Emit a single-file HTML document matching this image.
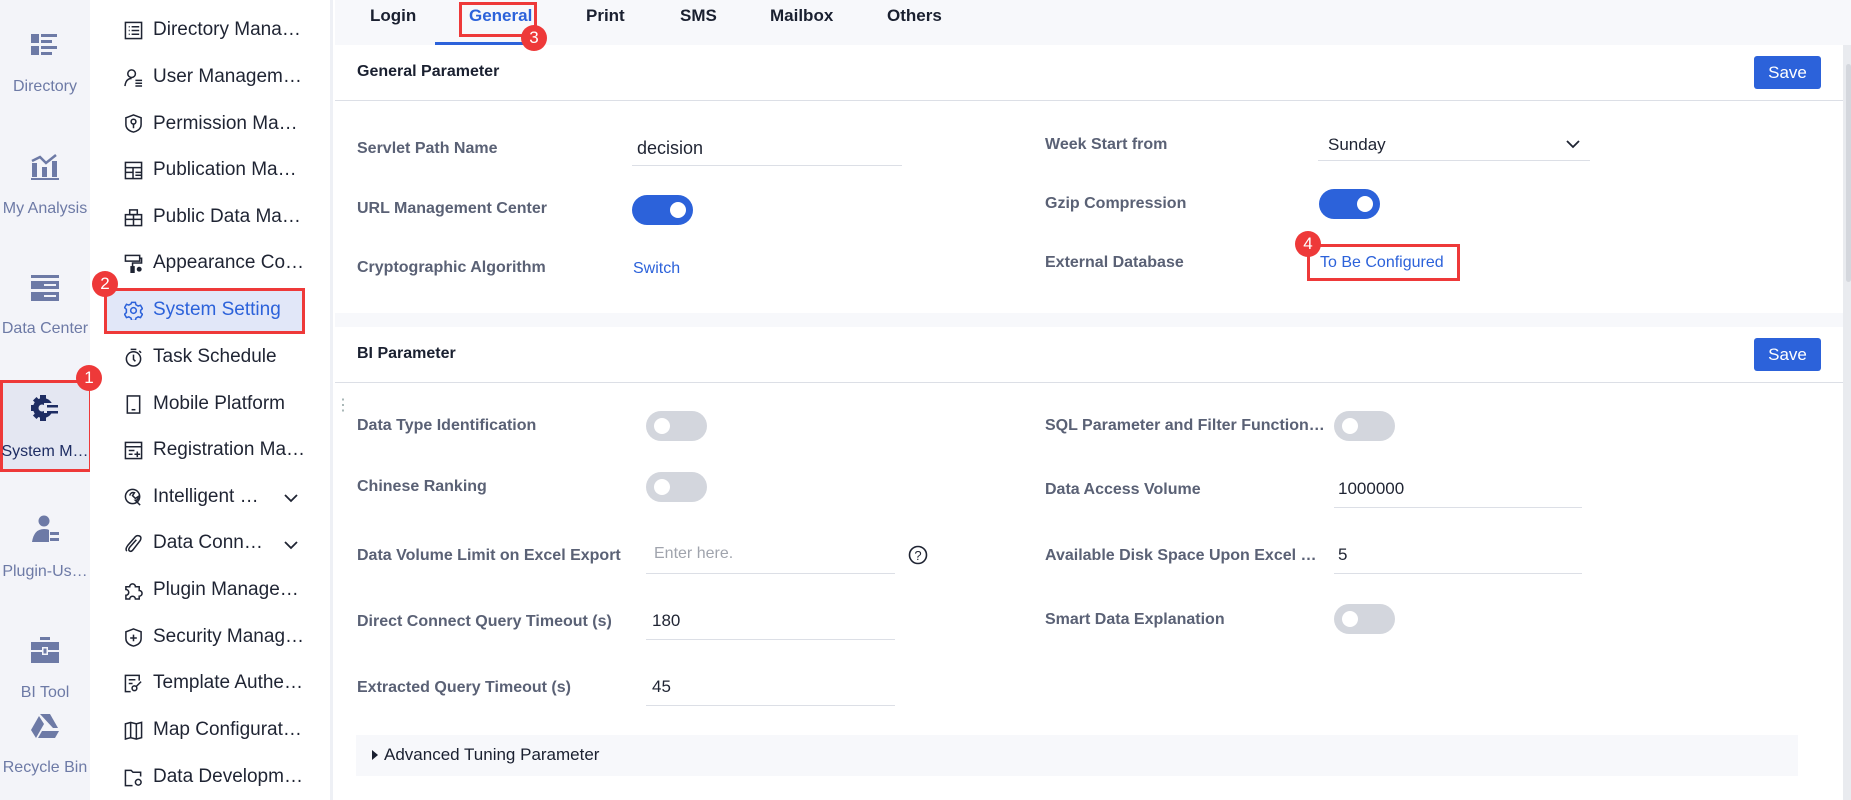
<!DOCTYPE html>
<html><head><meta charset="utf-8"><style>
*{box-sizing:border-box;margin:0;padding:0}
body{width:1851px;height:800px;overflow:hidden;background:#fff;font-family:"Liberation Sans",Arial,sans-serif;position:relative}
.a{position:absolute;white-space:nowrap}
.rail{left:0;top:0;width:90px;height:800px;background:#f3f4f9}
.rl{font-size:16px;color:#6d7aa6;width:90px;text-align:center;overflow:hidden;text-overflow:ellipsis}
.menu{left:90px;top:0;width:243px;height:800px;background:#fff;border-right:3px solid #eef0f5}
.mi{font-size:19px;color:#1f2433;left:153px}
.ic{left:124px;width:19px;height:19px}
.tabs{left:335px;top:0;width:1516px;height:45px;background:#f7f8fb}
.tab{top:6px;font-size:17px;font-weight:bold;color:#1a2030}
.lbl{font-size:16px;font-weight:bold;color:#5a6175}
.val{font-size:18px;color:#1f2433}
.ul{height:1px;background:#dcdfe6}
.tg{width:61px;height:30px;border-radius:15px;background:#2c62da}
.tg::after{content:"";position:absolute;right:7px;top:7px;width:16px;height:16px;border-radius:50%;background:#fff}
.tg.off{background:#d3d6dd}
.tg.off::after{left:8px;right:auto}
.save{width:67px;height:33px;background:#2c62da;color:#fff;font-size:17px;text-align:center;line-height:33px;border-radius:3px}
.hd{font-size:16px;font-weight:bold;color:#1a2030}
.badge{width:26px;height:26px;border-radius:50%;background:#ee3939;color:#fff;font-size:17px;text-align:center;line-height:26px}
.box{border:3px solid #ee3939}
.blue{color:#2c62da;font-size:16px}
</style></head><body>
<div class="a rail"></div>
<svg class="a" style="left:31px;top:33px" width="28" height="24" viewBox="0 0 28 24" fill="#6d7aa6"><rect x="0" y="1" width="8" height="9"/><rect x="10" y="1" width="16" height="3"/><rect x="10" y="7" width="11" height="3"/><rect x="0" y="13" width="8" height="9"/><rect x="10" y="13" width="16" height="3"/><rect x="10" y="19" width="11" height="3"/></svg>
<div class="a rl" style="top:78px">Directory</div>
<svg class="a" style="left:31px;top:153px" width="28" height="27" viewBox="0 0 28 27" fill="#6d7aa6"><rect x="1" y="10" width="5" height="14"/><rect x="11" y="14" width="5" height="10"/><rect x="21" y="8" width="5" height="16"/><rect x="0" y="25" width="28" height="2"/><path d="M1 8 L9 4 L15 10 L25 2" stroke="#6d7aa6" stroke-width="2.5" fill="none"/></svg>
<div class="a rl" style="top:200px">My Analysis</div>
<svg class="a" style="left:31px;top:275px" width="28" height="26" viewBox="0 0 28 26" fill="#6d7aa6"><rect x="0" y="0" width="28" height="3"/><rect x="0" y="6" width="28" height="8"/><rect x="0" y="17" width="28" height="9"/><rect x="13" y="9" width="12" height="2" fill="#f3f4f9"/><rect x="13" y="20" width="12" height="2" fill="#f3f4f9"/></svg>
<div class="a rl" style="top:320px">Data Center</div>
<div class="a" style="left:0;top:380px;width:92px;height:92px;background:#e4e7f2"></div>
<div class="a box" style="left:0;top:380px;width:92px;height:92px"></div>
<svg class="a" style="left:31px;top:394px" width="28" height="28" viewBox="0 0 28 28"><circle cx="12" cy="14" r="10" fill="#1e2d63"/><g fill="#1e2d63"><rect x="9" y="1" width="6" height="5"/><rect x="9" y="22" width="6" height="5"/><rect x="0" y="11" width="5" height="6"/><rect x="3" y="4" width="5" height="5" transform="rotate(45 5.5 6.5)"/><rect x="3" y="19" width="5" height="5" transform="rotate(45 5.5 21.5)"/></g><rect x="13" y="9" width="15" height="10" fill="#e4e7f2"/><rect x="16" y="11" width="11" height="2.5" fill="#1e2d63"/><rect x="16" y="17" width="11" height="2.5" fill="#1e2d63"/><circle cx="11" cy="14" r="3.5" fill="#e4e7f2"/></svg>
<div class="a rl" style="top:443px;color:#1e2d63;left:0">System M…</div>
<svg class="a" style="left:31px;top:515px" width="28" height="28" viewBox="0 0 28 28" fill="#6d7aa6"><circle cx="13" cy="6" r="5.5"/><path d="M1 27 Q3 14 13 14 Q17 14 18 15 L18 27Z"/><rect x="19" y="17" width="9" height="3"/><rect x="19" y="23" width="9" height="3"/></svg>
<div class="a rl" style="top:563px">Plugin-Us…</div>
<svg class="a" style="left:31px;top:637px" width="28" height="26" viewBox="0 0 28 26" fill="#6d7aa6"><rect x="9" y="0" width="10" height="3"/><rect x="0" y="5" width="28" height="8"/><rect x="0" y="15" width="28" height="11"/><rect x="11" y="10" width="6" height="8" fill="#f3f4f9"/><rect x="12.5" y="11.5" width="3" height="5" fill="#6d7aa6"/></svg>
<div class="a rl" style="top:684px">BI Tool</div>
<svg class="a" style="left:31px;top:714px" width="28" height="24" viewBox="0 0 28 24" fill="#6d7aa6"><path d="M9 0 H19 L27 14 L22 14 Z"/><path d="M8 2 L13 10 L5 24 L0 16Z"/><path d="M7 24 L11 17 H28 L24 24Z"/></svg>
<div class="a rl" style="top:759px">Recycle Bin</div>

<div class="a menu"></div>
<div class="a badge" style="left:76px;top:365px">1</div>
<div class="a" style="left:104px;top:288px;width:201px;height:46px;background:#e1e7f8"></div>
<div class="a box" style="left:104px;top:288px;width:201px;height:46px"></div>
<div class="a badge" style="left:92px;top:271px">2</div>

<svg class="a ic" style="top:21px" viewBox="0 0 20 20" fill="none" stroke="#1f2433" stroke-width="1.6"><rect x="1.5" y="1.5" width="17" height="17"/><path d="M5 6h1M8 6h8M5 10h1M8 10h8M5 14h1M8 14h8"/></svg>
<div class="a mi" style="top:19px">Directory Mana…</div>
<svg class="a ic" style="top:68px" viewBox="0 0 20 20" fill="none" stroke="#1f2433" stroke-width="1.6"><circle cx="8" cy="6" r="4"/><path d="M1 19 Q2 11 8 11 M12 13h7M12 16h7M12 19h7"/></svg>
<div class="a mi" style="top:66px">User Managem…</div>
<svg class="a ic" style="top:114px" viewBox="0 0 20 20" fill="none" stroke="#1f2433" stroke-width="1.6"><path d="M10 1 L18 4 V11 Q18 17 10 19 Q2 17 2 11 V4Z"/><circle cx="10" cy="8" r="2.5"/><path d="M10 10.5V15"/></svg>
<div class="a mi" style="top:113px">Permission Ma…</div>
<svg class="a ic" style="top:161px" viewBox="0 0 20 20" fill="none" stroke="#1f2433" stroke-width="1.6"><rect x="1.5" y="1.5" width="17" height="17"/><path d="M1.5 7h17M1.5 12h8M9.5 7v11.5M12 12h6M12 15h6"/></svg>
<div class="a mi" style="top:159px">Publication Ma…</div>
<svg class="a ic" style="top:208px" viewBox="0 0 20 20" fill="none" stroke="#1f2433" stroke-width="1.6"><rect x="1.5" y="7" width="17" height="11.5"/><rect x="6" y="2" width="8" height="5"/><path d="M1.5 12h17M10 7v11"/></svg>
<div class="a mi" style="top:206px">Public Data Ma…</div>
<svg class="a ic" style="top:254px" viewBox="0 0 20 20" fill="none" stroke="#1f2433" stroke-width="1.6"><rect x="1.5" y="1.5" width="15" height="6"/><path d="M16.5 4.5h2v5H9v4"/><rect x="7.5" y="13.5" width="3" height="6" fill="#1f2433"/><circle cx="16" cy="16" r="1.8" fill="#1f2433"/></svg>
<div class="a mi" style="top:252px">Appearance Co…</div>
<svg class="a ic" style="top:301px" viewBox="0 0 20 20" fill="none" stroke="#2c62da" stroke-width="1.6"><path d="M8 1.5h4l.6 2.5 2.3 1.3 2.5-.8 2 3.5-1.9 1.8v2.4l1.9 1.8-2 3.5-2.5-.8-2.3 1.3-.6 2.5H8l-.6-2.5-2.3-1.3-2.5.8-2-3.5 1.9-1.8V8.8L.6 7l2-3.5 2.5.8 2.3-1.3Z"/><circle cx="10" cy="10" r="3"/></svg>
<div class="a mi" style="top:299px;color:#2c62da">System Setting</div>
<svg class="a ic" style="top:348px" viewBox="0 0 20 20" fill="none" stroke="#1f2433" stroke-width="1.6"><circle cx="10" cy="11.5" r="7.5"/><path d="M7 1.5h6M10 7v5l2 2M16 3l2 2"/></svg>
<div class="a mi" style="top:346px">Task Schedule</div>
<svg class="a ic" style="top:395px" viewBox="0 0 20 20" fill="none" stroke="#1f2433" stroke-width="1.6"><rect x="3.5" y="1" width="13" height="18"/><path d="M8 15.5h4"/></svg>
<div class="a mi" style="top:393px">Mobile Platform</div>
<svg class="a ic" style="top:441px" viewBox="0 0 20 20" fill="none" stroke="#1f2433" stroke-width="1.6"><rect x="1.5" y="1.5" width="17" height="17"/><path d="M1.5 6h17M5 10h6M5 14h4M14 11v6M11 14h6"/></svg>
<div class="a mi" style="top:439px">Registration Ma…</div>
<svg class="a ic" style="top:488px" viewBox="0 0 20 20" fill="none" stroke="#1f2433" stroke-width="1.6"><circle cx="9" cy="9" r="7.5"/><path d="M6 8 Q7 4 11 5 L9 8 L12 11 L15 9 Q15 13 12 13 L17 18"/></svg>
<div class="a mi" style="top:486px">Intelligent …</div>
<svg class="a" style="left:283px;top:492px" width="16" height="12" viewBox="0 0 16 12" fill="none" stroke="#1f2433" stroke-width="1.8"><path d="M2 3l6 6 6-6"/></svg>
<svg class="a ic" style="top:534px" viewBox="0 0 20 20" fill="none" stroke="#1f2433" stroke-width="1.6"><path d="M13 6 L6 14 Q4 17 6 18 Q8 19 10 16 L17 7 Q19 3 16 2 Q13 1 11 4 L4 12 Q1 16 3 18"/></svg>
<div class="a mi" style="top:532px">Data Conn…</div>
<svg class="a" style="left:283px;top:539px" width="16" height="12" viewBox="0 0 16 12" fill="none" stroke="#1f2433" stroke-width="1.8"><path d="M2 3l6 6 6-6"/></svg>
<svg class="a ic" style="top:581px" viewBox="0 0 20 20" fill="none" stroke="#1f2433" stroke-width="1.6"><path d="M2 6h4a3 3 0 1 1 6 0h4v4a3 3 0 1 1 0 6v3H12a3 3 0 1 0-6 0H2v-4a3 3 0 1 0 0-6Z"/></svg>
<div class="a mi" style="top:579px">Plugin Manage…</div>
<svg class="a ic" style="top:628px" viewBox="0 0 20 20" fill="none" stroke="#1f2433" stroke-width="1.6"><path d="M10 1 L18 4 V11 Q18 17 10 19 Q2 17 2 11 V4Z"/><path d="M10 7v7M6.5 10.5h7"/></svg>
<div class="a mi" style="top:626px">Security Manag…</div>
<svg class="a ic" style="top:674px" viewBox="0 0 20 20" fill="none" stroke="#1f2433" stroke-width="1.6"><path d="M16 7V1.5H1.5v17H7"/><path d="M5 6h7M5 10h4"/><circle cx="11" cy="15" r="2.5"/><path d="M13 13l5-5"/></svg>
<div class="a mi" style="top:672px">Template Authe…</div>
<svg class="a ic" style="top:721px" viewBox="0 0 20 20" fill="none" stroke="#1f2433" stroke-width="1.6"><path d="M1.5 3l5.5-1.5 6 1.5 5.5-1.5v16L13 19l-6-1.5L1.5 19Z M7 1.5v16M13 3v16"/></svg>
<div class="a mi" style="top:719px">Map Configurat…</div>
<svg class="a ic" style="top:768px" viewBox="0 0 20 20" fill="none" stroke="#1f2433" stroke-width="1.6"><path d="M9 18.5H1.5v-16h6l2 2h8V9"/><circle cx="15" cy="15" r="3"/></svg>
<div class="a mi" style="top:766px">Data Developm…</div>

<div class="a tabs"></div>
<div class="a tab" style="left:370px">Login</div>
<div class="a tab" style="left:469px;color:#2c62da">General</div>
<div class="a tab" style="left:586px">Print</div>
<div class="a tab" style="left:680px">SMS</div>
<div class="a tab" style="left:770px">Mailbox</div>
<div class="a tab" style="left:887px">Others</div>
<div class="a" style="left:435px;top:42px;width:90px;height:3px;background:#2c62da"></div>
<div class="a box" style="left:459px;top:2px;width:78px;height:35px"></div>
<div class="a badge" style="left:521px;top:25px">3</div>

<div class="a" style="left:1843px;top:45px;width:8px;height:755px;background:#e9ebef"></div>
<div class="a" style="left:1846px;top:64px;width:5px;height:218px;background:#d4d7dd;border-radius:3px"></div>

<div class="a hd" style="left:357px;top:63px">General Parameter</div>
<div class="a save" style="left:1754px;top:56px">Save</div>
<div class="a ul" style="left:335px;top:100px;width:1508px"></div>
<div class="a lbl" style="left:357px;top:140px">Servlet Path Name</div>
<div class="a val" style="left:637px;top:138px">decision</div>
<div class="a ul" style="left:632px;top:165px;width:270px"></div>
<div class="a lbl" style="left:357px;top:200px">URL Management Center</div>
<div class="a tg" style="left:632px;top:195px"></div>
<div class="a lbl" style="left:357px;top:259px">Cryptographic Algorithm</div>
<div class="a blue" style="left:633px;top:260px">Switch</div>

<div class="a lbl" style="left:1045px;top:136px">Week Start from</div>
<div class="a" style="left:1328px;top:135px;font-size:17px;color:#1f2433">Sunday</div>
<svg class="a" style="left:1565px;top:138px" width="16" height="12" viewBox="0 0 16 12" fill="none" stroke="#1f2433" stroke-width="1.8"><path d="M2 3l6 6 6-6"/></svg>
<div class="a ul" style="left:1318px;top:160px;width:272px"></div>
<div class="a lbl" style="left:1045px;top:195px">Gzip Compression</div>
<div class="a tg" style="left:1319px;top:189px;width:61px"></div>
<div class="a lbl" style="left:1045px;top:254px">External Database</div>
<div class="a blue" style="left:1320px;top:254px">To Be Configured</div>
<div class="a box" style="left:1307px;top:244px;width:153px;height:37px"></div>
<div class="a badge" style="left:1295px;top:231px">4</div>

<div class="a" style="left:335px;top:313px;width:1508px;height:14px;background:#f7f8fb"></div>

<div class="a hd" style="left:357px;top:345px">BI Parameter</div>
<div class="a save" style="left:1754px;top:338px">Save</div>
<div class="a ul" style="left:335px;top:382px;width:1508px"></div>
<div class="a lbl" style="left:357px;top:417px">Data Type Identification</div>
<div class="a tg off" style="left:646px;top:411px;width:61px"></div>
<div class="a lbl" style="left:357px;top:478px">Chinese Ranking</div>
<div class="a tg off" style="left:646px;top:472px;width:61px"></div>
<div class="a lbl" style="left:357px;top:547px">Data Volume Limit on Excel Export</div>
<div class="a" style="left:654px;top:545px;font-size:16px;color:#a0a4ad">Enter here.</div>
<div class="a ul" style="left:646px;top:573px;width:249px"></div>
<svg class="a" style="left:908px;top:545px" width="20" height="20" viewBox="0 0 20 20"><circle cx="10" cy="10" r="8.5" fill="none" stroke="#1f2433" stroke-width="1.6"/><text x="10" y="15" text-anchor="middle" font-size="13" font-family="Liberation Sans" fill="#1f2433">?</text></svg>
<div class="a lbl" style="left:357px;top:613px">Direct Connect Query Timeout (s)</div>
<div class="a val" style="left:652px;top:611px;font-size:17px">180</div>
<div class="a ul" style="left:646px;top:639px;width:249px"></div>
<div class="a lbl" style="left:357px;top:679px">Extracted Query Timeout (s)</div>
<div class="a val" style="left:652px;top:677px;font-size:17px">45</div>
<div class="a ul" style="left:646px;top:705px;width:249px"></div>

<div class="a lbl" style="left:1045px;top:417px">SQL Parameter and Filter Function…</div>
<div class="a tg off" style="left:1334px;top:411px"></div>
<div class="a lbl" style="left:1045px;top:481px">Data Access Volume</div>
<div class="a val" style="left:1338px;top:479px;font-size:17px">1000000</div>
<div class="a ul" style="left:1334px;top:507px;width:248px"></div>
<div class="a lbl" style="left:1045px;top:547px">Available Disk Space Upon Excel …</div>
<div class="a val" style="left:1338px;top:545px;font-size:17px">5</div>
<div class="a ul" style="left:1334px;top:573px;width:248px"></div>
<div class="a lbl" style="left:1045px;top:611px">Smart Data Explanation</div>
<div class="a tg off" style="left:1334px;top:604px"></div>

<div class="a" style="left:356px;top:735px;width:1442px;height:41px;background:#f7f8fb"></div>
<svg class="a" style="left:371px;top:749px" width="8" height="12" viewBox="0 0 8 12"><path d="M1 1L7 6L1 11Z" fill="#1a2030"/></svg>
<div class="a" style="left:384px;top:745px;font-size:17px;color:#1a2030">Advanced Tuning Parameter</div>
<div class="a" style="left:335px;top:395px;width:3px;color:#9aa">⋮</div>
</body></html>
